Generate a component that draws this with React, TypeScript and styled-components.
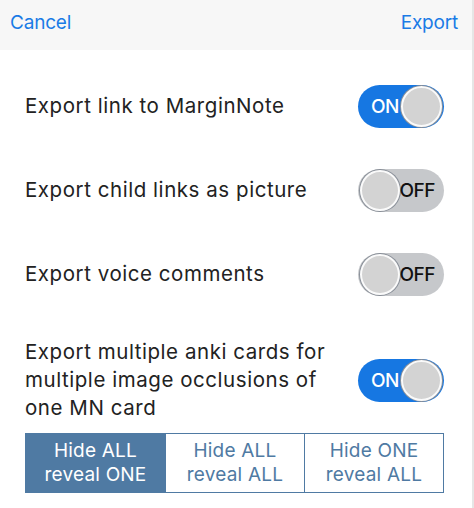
import React, { useState } from "react";
import styled, { createGlobalStyle } from "styled-components";

const Global = createGlobalStyle`
  html, body { margin: 0; padding: 0; background: #fff; }
  body { font-family: Inter, "Noto Sans", sans-serif; }
`;

const Page = styled.div`
  width: 474px;
  height: 508px;
  background: #fff;
  box-sizing: border-box;
  border-right: 2px solid #e6e6e6;
  overflow: hidden;
`;

const Header = styled.div`
  height: 50px;
  background: #f7f7f7;
  display: flex;
  align-items: center;
  justify-content: space-between;
  padding: 0 14px 6px 10px;
  box-sizing: border-box;
`;

const NavButton = styled.span`
  color: #1a7be6;
  font-size: 19px;
  letter-spacing: -0.2px;
`;

const Body = styled.div`
  padding: 14px 28px 0 25px;
  display: flex;
  flex-direction: column;
`;

const Row = styled.div<{ $tall?: boolean }>`
  height: ${(p) => (p.$tall ? "auto" : "84px")};
  padding-top: ${(p) => (p.$tall ? "22px" : "0")};
  display: flex;
  align-items: center;
  justify-content: space-between;
`;

const Label = styled.div`
  font-size: 20.5px;
  line-height: 28px;
  color: #222;
  letter-spacing: 0.55px;
  max-width: 325px;
`;

const Track = styled.button<{ $on: boolean }>`
  width: 86px;
  height: 43px;
  border-radius: 22px;
  border: none;
  padding: 0 2px;
  margin: 0;
  flex-shrink: 0;
  display: flex;
  align-items: center;
  flex-direction: ${(p) => (p.$on ? "row" : "row-reverse")};
  justify-content: space-between;
  background: ${(p) => (p.$on ? "#1677e2" : "#c6c8cb")};
  cursor: pointer;
  font-family: inherit;
`;

const TrackText = styled.span<{ $on: boolean }>`
  font-size: 19px;
  font-weight: 500;
  color: ${(p) => (p.$on ? "#fff" : "#111")};
  padding: ${(p) => (p.$on ? "0 0 0 11px" : "0 7px 0 0")};
  letter-spacing: -0.5px;
`;

const Knob = styled.span`
  width: 37px;
  height: 37px;
  border-radius: 50%;
  background: #d3d3d3;
  border: 2px solid #fafafa;
  box-shadow: 0 0 0 1px #8a9099;
`;

const Segmented = styled.div`
  margin-top: 11px;
  display: grid;
  grid-template-columns: repeat(3, 1fr);
  border: 1.5px solid #4f7aa3;
  width: 419px;
  box-sizing: border-box;
`;

const Segment = styled.button<{ $active: boolean; $first: boolean }>`
  height: 58px;
  border: none;
  border-left: ${(p) => (p.$first ? "none" : "1.5px solid #4f7aa3")};
  background: ${(p) => (p.$active ? "#4f7aa3" : "#fff")};
  color: ${(p) => (p.$active ? "#fff" : "#4f7aa3")};
  font-family: inherit;
  font-size: 19px;
  line-height: 24px;
  letter-spacing: 0.2px;
  padding: 0;
  cursor: pointer;
`;

function Toggle({ on, onClick }: { on: boolean; onClick: () => void }) {
  return (
    <Track $on={on} onClick={onClick}>
      <TrackText $on={on}>{on ? "ON" : "OFF"}</TrackText>
      <Knob />
    </Track>
  );
}

export default function App() {
  const [vals, setVals] = useState([true, false, false, true]);
  const [mode, setMode] = useState(0);
  const flip = (i: number) => setVals((v) => v.map((x, j) => (j === i ? !x : x)));
  const rows = [
    "Export link to MarginNote",
    "Export child links as picture",
    "Export voice comments",
    "Export multiple anki cards for multiple image occlusions of one MN card",
  ];
  const modes = [
    ["Hide ALL", "reveal ONE"],
    ["Hide ALL", "reveal ALL"],
    ["Hide ONE", "reveal ALL"],
  ];
  return (
    <Page>
      <Global />
      <Header>
        <NavButton>Cancel</NavButton>
        <NavButton>Export</NavButton>
      </Header>
      <Body>
        {rows.map((label, i) => (
          <Row key={i} $tall={i === 3}>
            <Label>{label}</Label>
            <Toggle on={vals[i]} onClick={() => flip(i)} />
          </Row>
        ))}
        <Segmented>
          {modes.map((m, i) => (
            <Segment key={i} $first={i === 0} $active={mode === i} onClick={() => setMode(i)}>
              {m[0]}
              <br />
              {m[1]}
            </Segment>
          ))}
        </Segmented>
      </Body>
    </Page>
  );
}
